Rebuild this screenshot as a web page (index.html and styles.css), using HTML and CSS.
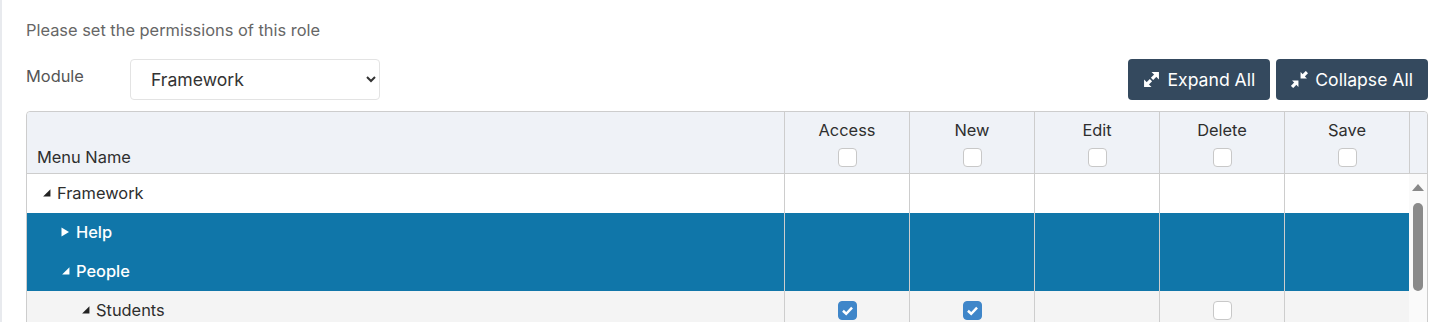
FILE: index.html
```html
<!DOCTYPE html>
<html lang="en">
<head>
  <meta charset="UTF-8" />
  <title>Role permissions</title>
  <link rel="stylesheet" href="styles.css">
</head>
<body>
  <div class="page">
    <p class="intro">Please set the permissions of this role</p>

    <div class="toolbar">
      <label class="module-label" for="module">Module</label>
      <select id="module" class="module-select">
        <option>Framework</option>
      </select>
      <div class="actions">
        <button class="btn">
          <svg class="btn-icon" viewBox="0 0 16 16" width="17" height="17">
            <polygon points="8,1 15,1 15,8" fill="#fff"/>
            <line x1="12.5" y1="3.5" x2="8.5" y2="7.5" stroke="#fff" stroke-width="3"/>
            <polygon points="1,8 1,15 8,15" fill="#fff"/>
            <line x1="3.5" y1="12.5" x2="7.5" y2="8.5" stroke="#fff" stroke-width="3"/>
          </svg>
          Expand All
        </button>
        <button class="btn">
          <svg class="btn-icon" viewBox="0 0 16 16" width="17" height="17">
            <polygon points="9,1 9,7 15,7" fill="#fff"/>
            <line x1="15" y1="1" x2="11" y2="5" stroke="#fff" stroke-width="3"/>
            <polygon points="1,9 7,9 7,15" fill="#fff"/>
            <line x1="1" y1="15" x2="5" y2="11" stroke="#fff" stroke-width="3"/>
          </svg>
          Collapse All
        </button>
      </div>
    </div>

    <div class="perm-grid">
      <div class="grid-head">
        <div class="head-name">Menu Name</div>
        <div class="head-col"><span>Access</span><span class="chk"></span></div>
        <div class="head-col"><span>New</span><span class="chk"></span></div>
        <div class="head-col"><span>Edit</span><span class="chk"></span></div>
        <div class="head-col"><span>Delete</span><span class="chk"></span></div>
        <div class="head-col"><span>Save</span><span class="chk"></span></div>
        <div class="head-pad"></div>
      </div>

      <div class="grid-body">
        <div class="rows">
          <!-- level 0 -->
          <div class="row">
            <div class="name lvl-0">
              <span class="toggle"><svg viewBox="0 0 8 8" width="9" height="9"><polygon points="7.5,1 7.5,7.5 1,7.5" fill="#222"/></svg></span>
              Framework
            </div>
            <div class="cell"></div><div class="cell"></div><div class="cell"></div><div class="cell"></div><div class="cell"></div>
          </div>
          <!-- level 1 -->
          <div class="row selected">
            <div class="name lvl-1">
              <span class="toggle"><svg viewBox="0 0 8 10" width="8" height="10"><polygon points="0.5,0.5 8,5 0.5,9.5" fill="#fff"/></svg></span>
              Help
            </div>
            <div class="cell"></div><div class="cell"></div><div class="cell"></div><div class="cell"></div><div class="cell"></div>
          </div>
          <div class="row selected">
            <div class="name lvl-1">
              <span class="toggle"><svg viewBox="0 0 8 8" width="9" height="9"><polygon points="7.5,1 7.5,7.5 1,7.5" fill="#fff"/></svg></span>
              People
            </div>
            <div class="cell"></div><div class="cell"></div><div class="cell"></div><div class="cell"></div><div class="cell"></div>
          </div>
          <!-- level 2 -->
          <div class="row alt">
            <div class="name lvl-2">
              <span class="toggle"><svg viewBox="0 0 8 8" width="9" height="9"><polygon points="7.5,1 7.5,7.5 1,7.5" fill="#222"/></svg></span>
              Students
            </div>
            <div class="cell"><span class="chk checked"><svg viewBox="0 0 12 12" width="13" height="13"><polyline points="1.8,6.2 4.8,9 10.2,3.4" fill="none" stroke="#fff" stroke-width="2.3"/></svg></span></div>
            <div class="cell"><span class="chk checked"><svg viewBox="0 0 12 12" width="13" height="13"><polyline points="1.8,6.2 4.8,9 10.2,3.4" fill="none" stroke="#fff" stroke-width="2.3"/></svg></span></div>
            <div class="cell"></div>
            <div class="cell"><span class="chk"></span></div>
            <div class="cell"></div>
          </div>
        </div>
        <div class="scrollbar">
          <span class="scroll-up"></span>
          <span class="scroll-thumb"></span>
        </div>
      </div>
    </div>
  </div>
</body>
</html>
```

FILE: styles.css
```css
* { box-sizing: border-box; }
html, body { height: 100%; }
body {
  margin: 0; background: #fff; color: #2e2e2e; overflow: hidden;
  font-family: Inter, 'Liberation Sans', sans-serif;
}
.page {
  height: 100%; border-left: 2px solid #e8eaee;
  padding: 0 24px;
}
.intro {
  margin: 0; padding-top: 20px; font-size: 16.4px; line-height: 20px;
  color: #666;
}

/* toolbar */
.toolbar {
  display: flex; align-items: flex-start; margin-top: 19px; height: 41px;
}
.module-label {
  width: 104px; padding-top: 7px; font-size: 16.4px; line-height: 20px; color: #555;
}
.module-select {
  width: 250px; height: 41px; padding: 0 14px 0 16px;
  font-family: inherit; font-size: 17.6px; color: #333;
  background: #fff; border: 1px solid #e3e3e3; border-radius: 4px;
}
.actions {
  margin-left: auto; display: flex; gap: 6px;
}
.btn {
  display: flex; align-items: center; gap: 7px;
  height: 41px; padding: 0 15px 0 15px;
  background: #34495e; color: #fff; border: none; border-radius: 4px;
  font-family: inherit; font-size: 17.6px; cursor: pointer;
}
.btn-icon { display: block; }

/* grid */
.perm-grid {
  margin-top: 11px; border: 1px solid #cdcdcd; border-radius: 4px;
  width: 1402px;
}
.grid-head {
  display: grid; grid-template-columns: 757px repeat(5, 125px) 18px;
  height: 62px; background: #eff2f7; border-bottom: 1px solid #cdcdcd;
  border-radius: 4px 4px 0 0;
}
.head-name {
  align-self: end; padding: 0 10px 6px; font-size: 16.4px; line-height: 20px;
}
.head-col, .head-pad { border-left: 1px solid #cdcdcd; }
.head-col {
  display: flex; flex-direction: column; align-items: center;
  padding-top: 8px; gap: 8px; font-size: 16.4px; line-height: 20px;
}
.chk {
  display: flex; align-items: center; justify-content: center;
  width: 19px; height: 19px; background: #fff;
  border: 1px solid #c8c8c8; border-radius: 4px;
}
.chk.checked { background: #3f86c9; border-color: #3f86c9; }

.grid-body { display: flex; height: 200px; overflow: hidden; }
.rows { width: 1382px; }
.row {
  display: grid; grid-template-columns: 757px repeat(5, 125px);
  height: 39px; background: #fff;
}
.row.selected { background: #1076a9; color: #fff; font-weight: 500; }
.row.alt { background: #f4f4f4; }
.cell {
  border-left: 1px solid #cdcdcd;
  display: flex; align-items: center; justify-content: center;
}
.name {
  display: flex; align-items: center; font-size: 16.4px; padding-bottom: 2px;
}
.lvl-0 { padding-left: 15px; }
.lvl-1 { padding-left: 34px; }
.lvl-2 { padding-left: 54px; }
.toggle { width: 15px; display: flex; align-items: center; }
.toggle svg { display: block; }

.scrollbar {
  width: 18px; background: #fafafa; position: relative;
}
.scroll-up {
  position: absolute; left: 3px; top: 10px;
  border-left: 6px solid transparent; border-right: 6px solid transparent;
  border-bottom: 7px solid #888; width: 0; height: 0;
}
.scroll-thumb {
  position: absolute; left: 4px; top: 29px; width: 10px; height: 88px;
  background: #8a8a8a; border-radius: 5px;
}
```
